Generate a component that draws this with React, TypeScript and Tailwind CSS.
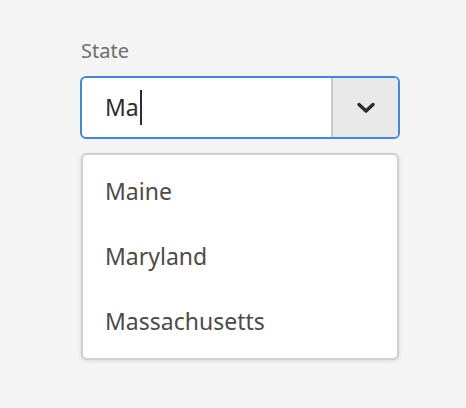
import React from "react";

export default function App() {
  const items = ["Maine", "Maryland", "Massachusetts"];
  return (
    <div
      className="w-[466px] h-[408px] bg-[#f4f4f4] pl-[80px] pt-[39px]"
      style={{ fontFamily: '"Noto Sans", sans-serif' }}
    >
      <div className="w-[320px] flex flex-col">
        <label className="text-[20px] leading-[24px] text-[#6e6e6e] pl-[1px]">State</label>
        <div className="mt-[13px] h-[63px] flex rounded-[6px] border-2 border-[#3f86e5] bg-white overflow-hidden">
          <div className="flex-1 flex items-center pl-[23px] text-[23px] text-[#2c2c2c]">
            <span>Ma</span>
            <span className="w-[2px] h-[35px] bg-[#2c2c2c] ml-[1px]" />
          </div>
          <div className="w-[67px] flex items-center justify-center bg-[#e9e9e9] border-l-2 border-[#cacaca]">
            <svg width="20" height="12" viewBox="0 0 20 12">
              <path d="M3 2.5 L10 9 L17 2.5" fill="none" stroke="#2c2c2c" strokeWidth="3.5" strokeLinecap="round" strokeLinejoin="round" />
            </svg>
          </div>
        </div>
        <div className="mt-[14px] mx-[1px] rounded-[6px] border-2 border-[#d0d0d0] bg-white shadow-[0_1px_4px_rgba(0,0,0,0.12)] py-[4px]">
          {items.map((s) => (
            <div key={s} className="h-[65px] flex items-center pl-[22px] text-[23px] text-[#4b4b4b]">
              {s}
            </div>
          ))}
        </div>
      </div>
    </div>
  );
}
